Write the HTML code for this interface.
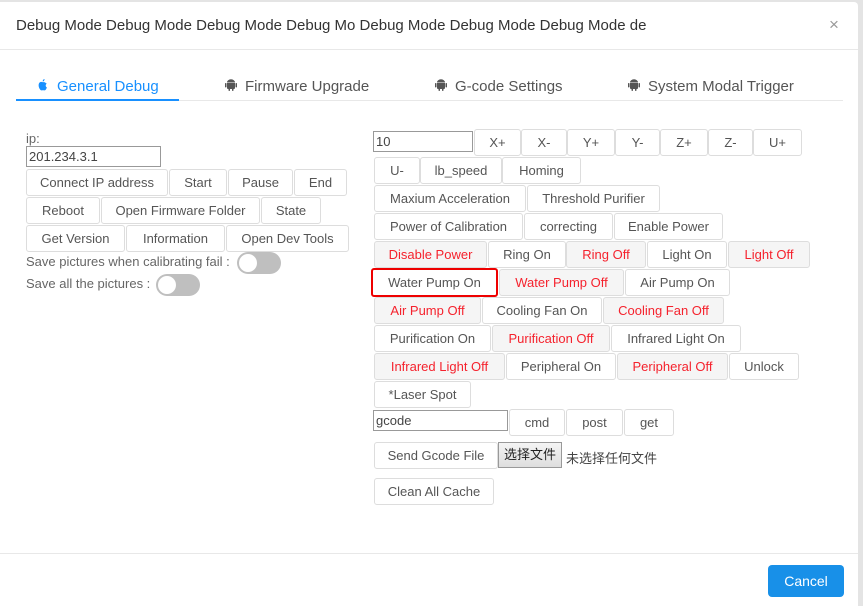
<!DOCTYPE html>
<html><head><meta charset="utf-8"><style>
*{box-sizing:border-box;margin:0;padding:0}
body{width:863px;height:606px;background:#e4e4e4;font-family:"Liberation Sans","Noto Sans CJK SC",sans-serif;position:relative;overflow:hidden}
.modal{position:absolute;left:0;top:2px;width:858px;height:604px;background:#fff;border-radius:0 4px 0 0}
.a{position:absolute}
.b{position:absolute;height:27px;border:1px solid #ddd;border-radius:3px;background:#fff;color:#555;font-size:13px;text-align:center;line-height:25px;white-space:nowrap}
.r{background:#f5f5f5;color:#f5222d}
.in{position:absolute;height:21px;border:1px solid #999;font-size:13px;color:#444;padding-left:2px;line-height:19px}
.t{font-size:13px;color:#666;position:absolute;white-space:nowrap}
.tg{position:absolute;width:44px;height:22px;border-radius:11px;background:#bfbfbf}
.tg::after{content:"";position:absolute;left:2px;top:2px;width:18px;height:18px;border-radius:50%;background:#fff}
.tab{position:absolute;top:78px;font-size:15px;color:#555;white-space:nowrap}
</style></head><body>
<div class="modal"></div>
<div class="t" style="left:16px;top:17px;font-size:15px;color:#333">Debug Mode Debug Mode Debug Mode Debug Mo Debug Mode Debug Mode Debug Mode de</div>
<div class="t" style="left:829px;top:15px;font-size:17px;color:#999">×</div>
<div class="a" style="left:0;top:49px;width:858px;height:1px;background:#e8e8e8"></div>

<div class="tab" style="left:36px;color:#1890ff"><svg width="14" height="14" viewBox="0 0 14 14" style="vertical-align:-1px;margin-right:7px"><path d="M7 3.5c1-.2 1.5-1.3 1.6-2.5C7.5 1.1 6.6 2 6.7 3.5zM7 4.3c-1-.6-2.4-.7-3.4.2C2 6 2.5 9.5 4.2 11.6c.8 1 1.6 1 2.8.5 1.2.5 2 .5 2.8-.5.5-.7.9-1.4 1.1-2.1-1.4-.6-1.7-2.8-.2-3.7C10 5 8.5 3.7 7 4.3z" fill="#1890ff"/></svg>General Debug</div>
<div class="tab" style="left:224px"><svg width="14" height="14" viewBox="0 0 14 14" style="vertical-align:-1px;margin-right:7px" fill="#555"><path d="M3 5h8v5a1 1 0 0 1-1 1H4a1 1 0 0 1-1-1zM3 4.5a4 3.2 0 0 1 8 0z"/><rect x="1" y="5" width="1.5" height="4.5" rx=".7"/><rect x="11.5" y="5" width="1.5" height="4.5" rx=".7"/><rect x="4.5" y="10" width="1.5" height="3" rx=".7"/><rect x="8" y="10" width="1.5" height="3" rx=".7"/></svg>Firmware Upgrade</div>
<div class="tab" style="left:434px"><svg width="14" height="14" viewBox="0 0 14 14" style="vertical-align:-1px;margin-right:7px" fill="#555"><path d="M3 5h8v5a1 1 0 0 1-1 1H4a1 1 0 0 1-1-1zM3 4.5a4 3.2 0 0 1 8 0z"/><rect x="1" y="5" width="1.5" height="4.5" rx=".7"/><rect x="11.5" y="5" width="1.5" height="4.5" rx=".7"/><rect x="4.5" y="10" width="1.5" height="3" rx=".7"/><rect x="8" y="10" width="1.5" height="3" rx=".7"/></svg>G-code Settings</div>
<div class="tab" style="left:627px"><svg width="14" height="14" viewBox="0 0 14 14" style="vertical-align:-1px;margin-right:7px" fill="#555"><path d="M3 5h8v5a1 1 0 0 1-1 1H4a1 1 0 0 1-1-1zM3 4.5a4 3.2 0 0 1 8 0z"/><rect x="1" y="5" width="1.5" height="4.5" rx=".7"/><rect x="11.5" y="5" width="1.5" height="4.5" rx=".7"/><rect x="4.5" y="10" width="1.5" height="3" rx=".7"/><rect x="8" y="10" width="1.5" height="3" rx=".7"/></svg>System Modal Trigger</div>
<div class="a" style="left:16px;top:100px;width:827px;height:1px;background:#e8e8e8"></div>
<div class="a" style="left:16px;top:99px;width:163px;height:2px;background:#1890ff"></div>

<div class="t" style="left:26px;top:131px">ip:</div>
<div class="in" style="left:26px;top:146px;width:135px">201.234.3.1</div>
<div class="b" style="left:26px;top:169px;width:142px">Connect IP address</div>
<div class="b" style="left:169px;top:169px;width:58px">Start</div>
<div class="b" style="left:228px;top:169px;width:65px">Pause</div>
<div class="b" style="left:294px;top:169px;width:53px">End</div>
<div class="b" style="left:26px;top:197px;width:74px">Reboot</div>
<div class="b" style="left:101px;top:197px;width:159px">Open Firmware Folder</div>
<div class="b" style="left:261px;top:197px;width:60px">State</div>
<div class="b" style="left:26px;top:225px;width:99px">Get Version</div>
<div class="b" style="left:126px;top:225px;width:99px">Information</div>
<div class="b" style="left:226px;top:225px;width:123px">Open Dev Tools</div>
<div class="t" style="left:26px;top:254px">Save pictures when calibrating fail :</div>
<div class="tg" style="left:237px;top:252px"></div>
<div class="t" style="left:26px;top:276px">Save all the pictures :</div>
<div class="tg" style="left:156px;top:274px"></div>

<div class="in" style="left:373px;top:131px;width:100px">10</div>
<div class="b" style="left:474px;top:129px;width:47px">X+</div>
<div class="b" style="left:521px;top:129px;width:46px">X-</div>
<div class="b" style="left:567px;top:129px;width:48px">Y+</div>
<div class="b" style="left:615px;top:129px;width:45px">Y-</div>
<div class="b" style="left:660px;top:129px;width:48px">Z+</div>
<div class="b" style="left:708px;top:129px;width:45px">Z-</div>
<div class="b" style="left:753px;top:129px;width:49px">U+</div>

<div class="b" style="left:374px;top:157px;width:46px">U-</div>
<div class="b" style="left:420px;top:157px;width:82px">lb_speed</div>
<div class="b" style="left:502px;top:157px;width:79px">Homing</div>

<div class="b" style="left:374px;top:185px;width:152px">Maxium Acceleration</div>
<div class="b" style="left:527px;top:185px;width:133px">Threshold Purifier</div>

<div class="b" style="left:374px;top:213px;width:149px">Power of Calibration</div>
<div class="b" style="left:524px;top:213px;width:89px">correcting</div>
<div class="b" style="left:614px;top:213px;width:109px">Enable Power</div>

<div class="b r" style="left:374px;top:241px;width:113px">Disable Power</div>
<div class="b" style="left:488px;top:241px;width:78px">Ring On</div>
<div class="b r" style="left:566px;top:241px;width:80px">Ring Off</div>
<div class="b" style="left:647px;top:241px;width:80px">Light On</div>
<div class="b r" style="left:728px;top:241px;width:82px">Light Off</div>

<div class="b" style="left:371px;top:268px;width:127px;height:29px;border:2px solid #e00;line-height:25px">Water Pump On</div>
<div class="b r" style="left:499px;top:269px;width:125px">Water Pump Off</div>
<div class="b" style="left:625px;top:269px;width:105px">Air Pump On</div>

<div class="b r" style="left:374px;top:297px;width:107px">Air Pump Off</div>
<div class="b" style="left:482px;top:297px;width:120px">Cooling Fan On</div>
<div class="b r" style="left:603px;top:297px;width:121px">Cooling Fan Off</div>

<div class="b" style="left:374px;top:325px;width:117px">Purification On</div>
<div class="b r" style="left:492px;top:325px;width:118px">Purification Off</div>
<div class="b" style="left:611px;top:325px;width:130px">Infrared Light On</div>

<div class="b r" style="left:374px;top:353px;width:131px">Infrared Light Off</div>
<div class="b" style="left:506px;top:353px;width:110px">Peripheral On</div>
<div class="b r" style="left:617px;top:353px;width:111px">Peripheral Off</div>
<div class="b" style="left:729px;top:353px;width:70px">Unlock</div>

<div class="b" style="left:374px;top:381px;width:97px">*Laser Spot</div>

<div class="in" style="left:373px;top:410px;width:135px">gcode</div>
<div class="b" style="left:509px;top:409px;width:56px">cmd</div>
<div class="b" style="left:566px;top:409px;width:57px">post</div>
<div class="b" style="left:624px;top:409px;width:50px">get</div>

<div class="b" style="left:374px;top:442px;width:124px">Send Gcode File</div>
<div class="a" style="left:498px;top:442px;width:64px;height:26px;border:1px solid #999;background:linear-gradient(#f4f4f4,#dedede);font-size:13px;color:#222;text-align:center;line-height:24px">选择文件</div>
<div class="t" style="left:566px;top:448px;color:#444">未选择任何文件</div>

<div class="b" style="left:374px;top:478px;width:120px">Clean All Cache</div>

<div class="a" style="left:0;top:553px;width:858px;height:1px;background:#e8e8e8"></div>
<div class="a" style="left:768px;top:565px;width:76px;height:32px;background:#1890e8;border-radius:4px;color:#fff;font-size:14px;text-align:center;line-height:32px">Cancel</div>
</body></html>
